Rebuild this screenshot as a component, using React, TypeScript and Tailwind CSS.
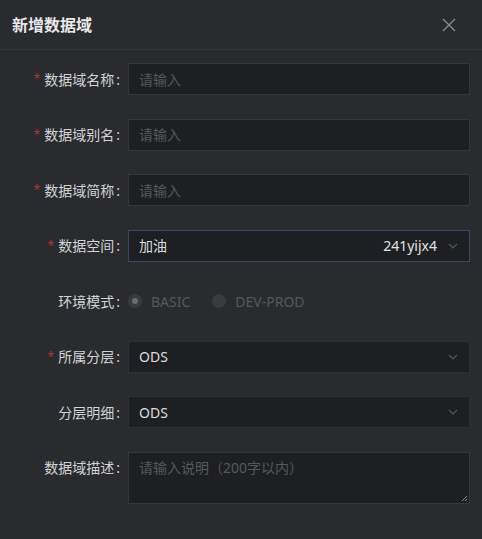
import React from "react";

const font = { fontFamily: '"Noto Sans", "Noto Sans CJK SC", sans-serif' };

function Label({ text, required }: { text: string; required?: boolean }) {
  return (
    <div className="w-[128px] shrink-0 pr-[8px] flex items-center justify-end text-[14px] text-[#d2d3d5]">
      {required && <span className="text-[#a8383c] mr-[4px] text-[12px] leading-none">*</span>}
      <span>{text}</span>
      <span className="ml-[2px]">:</span>
    </div>
  );
}

function Chevron() {
  return (
    <svg width="12" height="12" viewBox="0 0 12 12" fill="none" className="shrink-0">
      <path d="M2 4l4 4 4-4" stroke="#55575b" strokeWidth="1.2" />
    </svg>
  );
}

function TextInput({ placeholder }: { placeholder: string }) {
  return (
    <div className="flex-1 h-[32px] border border-[#36373b] bg-[#1e1f22] flex items-center px-[10px] text-[14px] text-[#56585c]">
      {placeholder}
    </div>
  );
}

function Select({ value, right, focused }: { value: string; right?: string; focused?: boolean }) {
  return (
    <div
      className={
        "flex-1 h-[32px] border bg-[#1e1f22] flex items-center pl-[10px] pr-[10px] text-[14px] text-[#dcdcde] " +
        (focused ? "border-[#3b4766]" : "border-[#2f3034]")
      }
    >
      <span className="flex-1">{value}</span>
      {right && <span className="mr-[10px] text-[#e2e2e4]">{right}</span>}
      <Chevron />
    </div>
  );
}

function Radio({ label, checked }: { label: string; checked?: boolean }) {
  return (
    <div className="flex items-center">
      <span className="w-[14px] h-[14px] rounded-full bg-[#3a3b3f] flex items-center justify-center">
        {checked && <span className="w-[6px] h-[6px] rounded-full bg-[#6a6c70]" />}
      </span>
      <span className="ml-[9px] text-[14px] text-[#56585c]">{label}</span>
    </div>
  );
}

export default function App() {
  return (
    <div style={font} className="w-[482px] min-h-screen bg-[#2a2b2e]">
      <div className="h-[50px] flex items-center justify-between pl-[12px] pr-[26px] border-b border-[#36383b]">
        <span className="text-[16px] font-bold text-[#e8e8ea]">新增数据域</span>
        <svg width="14" height="14" viewBox="0 0 14 14" fill="none">
          <path d="M1 1l12 12M13 1L1 13" stroke="#8a8b8e" strokeWidth="1.4" />
        </svg>
      </div>
      <div className="flex flex-col gap-[23.5px] pt-[13px] pr-[12px]">
        <div className="flex items-center">
          <Label text="数据域名称" required />
          <TextInput placeholder="请输入" />
        </div>
        <div className="flex items-center">
          <Label text="数据域别名" required />
          <TextInput placeholder="请输入" />
        </div>
        <div className="flex items-center">
          <Label text="数据域简称" required />
          <TextInput placeholder="请输入" />
        </div>
        <div className="flex items-center">
          <Label text="数据空间" required />
          <Select value="加油" right="241yijx4" focused />
        </div>
        <div className="flex items-center h-[32px]">
          <Label text="环境模式" />
          <div className="flex items-center gap-[22px]">
            <Radio label="BASIC" checked />
            <Radio label="DEV-PROD" />
          </div>
        </div>
        <div className="flex items-center">
          <Label text="所属分层" required />
          <Select value="ODS" />
        </div>
        <div className="flex items-center">
          <Label text="分层明细" />
          <Select value="ODS" />
        </div>
        <div className="flex items-start">
          <div className="pt-[5px] flex">
            <Label text="数据域描述" />
          </div>
          <div className="flex-1 h-[52px] border border-[#36373b] bg-[#1e1f22] px-[10px] pt-[4px] text-[14px] text-[#56585c] relative">
            请输入说明（200字以内）
            <svg width="7" height="7" viewBox="0 0 7 7" className="absolute right-[1px] bottom-[1px]">
              <path d="M6 1L1 6M6 4L4 6" stroke="#8a8b8e" strokeWidth="1" />
            </svg>
          </div>
        </div>
      </div>
    </div>
  );
}
